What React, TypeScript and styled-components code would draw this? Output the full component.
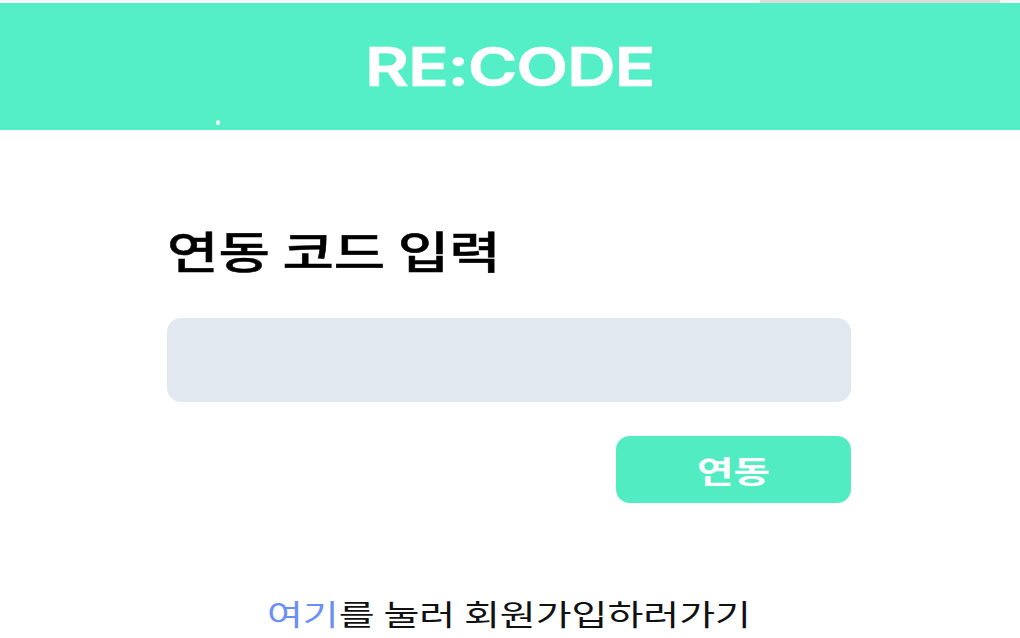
import React from 'react';
import styled, { createGlobalStyle } from 'styled-components';

const GlobalStyle = createGlobalStyle`
  html, body {
    margin: 0;
    padding: 0;
    height: 100%;
    background: #fff;
    overflow: hidden;
  }
`;

const Wrapper = styled.div`
  display: flex;
  flex-direction: column;
  width: 1020px;
  height: 638px;
  background: #fff;
  font-family: 'Noto Sans CJK KR', 'Noto Sans', sans-serif;
`;

const TopStrip = styled.div`
  display: flex;
  flex: 0 0 3px;
  justify-content: flex-end;
  background: #f6f6f6;
`;

const TopStripShade = styled.span`
  width: 240px;
  margin-right: 20px;
  background: #dedada;
`;

const Header = styled.header`
  position: relative;
  display: flex;
  flex: 0 0 127px;
  justify-content: center;
  align-items: center;
  background-color: #54efc7;
`;

const Logo = styled.h1`
  margin: 0;
  font-family: Inter, sans-serif;
  font-size: 54px;
  font-weight: 600;
  line-height: 1;
  letter-spacing: -1px;
  color: #fff;
  -webkit-text-stroke: 0.6px #fff;
  transform: scaleX(1.25);
`;

const Speck = styled.span`
  position: absolute;
  left: 216px;
  bottom: 5px;
  width: 4px;
  height: 5px;
  border-radius: 50%;
  background: #fff;
`;

const Main = styled.main`
  display: flex;
  flex: 1;
  flex-direction: column;
  padding: 92px 169px 0 167px;
`;

const Title = styled.h2`
  margin: 0;
  font-size: 44px;
  font-weight: 500;
  line-height: 56px;
  color: #000;
  white-space: nowrap;
  -webkit-text-stroke: 0.5px #000;
  transform: scaleX(1.27);
  transform-origin: left center;
`;

const CodeInput = styled.input`
  box-sizing: border-box;
  height: 84px;
  margin-top: 40px;
  border: 0;
  border-radius: 14px;
  background: #e2e8f0;
  outline: none;
`;

const Actions = styled.div`
  display: flex;
  justify-content: flex-end;
  margin-top: 34px;
`;

const LinkButton = styled.button`
  width: 235px;
  height: 67px;
  border: 0;
  border-radius: 14px;
  background: #52ecc3;
  font-family: 'Noto Sans CJK KR', 'Noto Sans', sans-serif;
  cursor: pointer;
`;

const ButtonLabel = styled.span`
  display: inline-block;
  font-size: 31px;
  font-weight: 700;
  color: #fff;
  transform: scaleX(1.28);
`;

const Footer = styled.p`
  margin: 90px 0 0;
  font-size: 29px;
  line-height: 40px;
  color: #111;
  text-align: center;
  white-space: nowrap;
  transform: scaleX(1.345);
`;

const SignUpLink = styled.a`
  color: #6b8ff5;
  text-decoration: none;
`;

export default function App() {
  return (
    <>
      <GlobalStyle />
      <Wrapper>
        <TopStrip>
          <TopStripShade />
        </TopStrip>
        <Header>
          <Logo>RE:CODE</Logo>
          <Speck />
        </Header>
        <Main>
          <Title>연동 코드 입력</Title>
          <CodeInput type="text" />
          <Actions>
            <LinkButton type="button">
              <ButtonLabel>연동</ButtonLabel>
            </LinkButton>
          </Actions>
          <Footer>
            <SignUpLink href="#">여기</SignUpLink>를 눌러 회원가입하러가기
          </Footer>
        </Main>
      </Wrapper>
    </>
  );
}
